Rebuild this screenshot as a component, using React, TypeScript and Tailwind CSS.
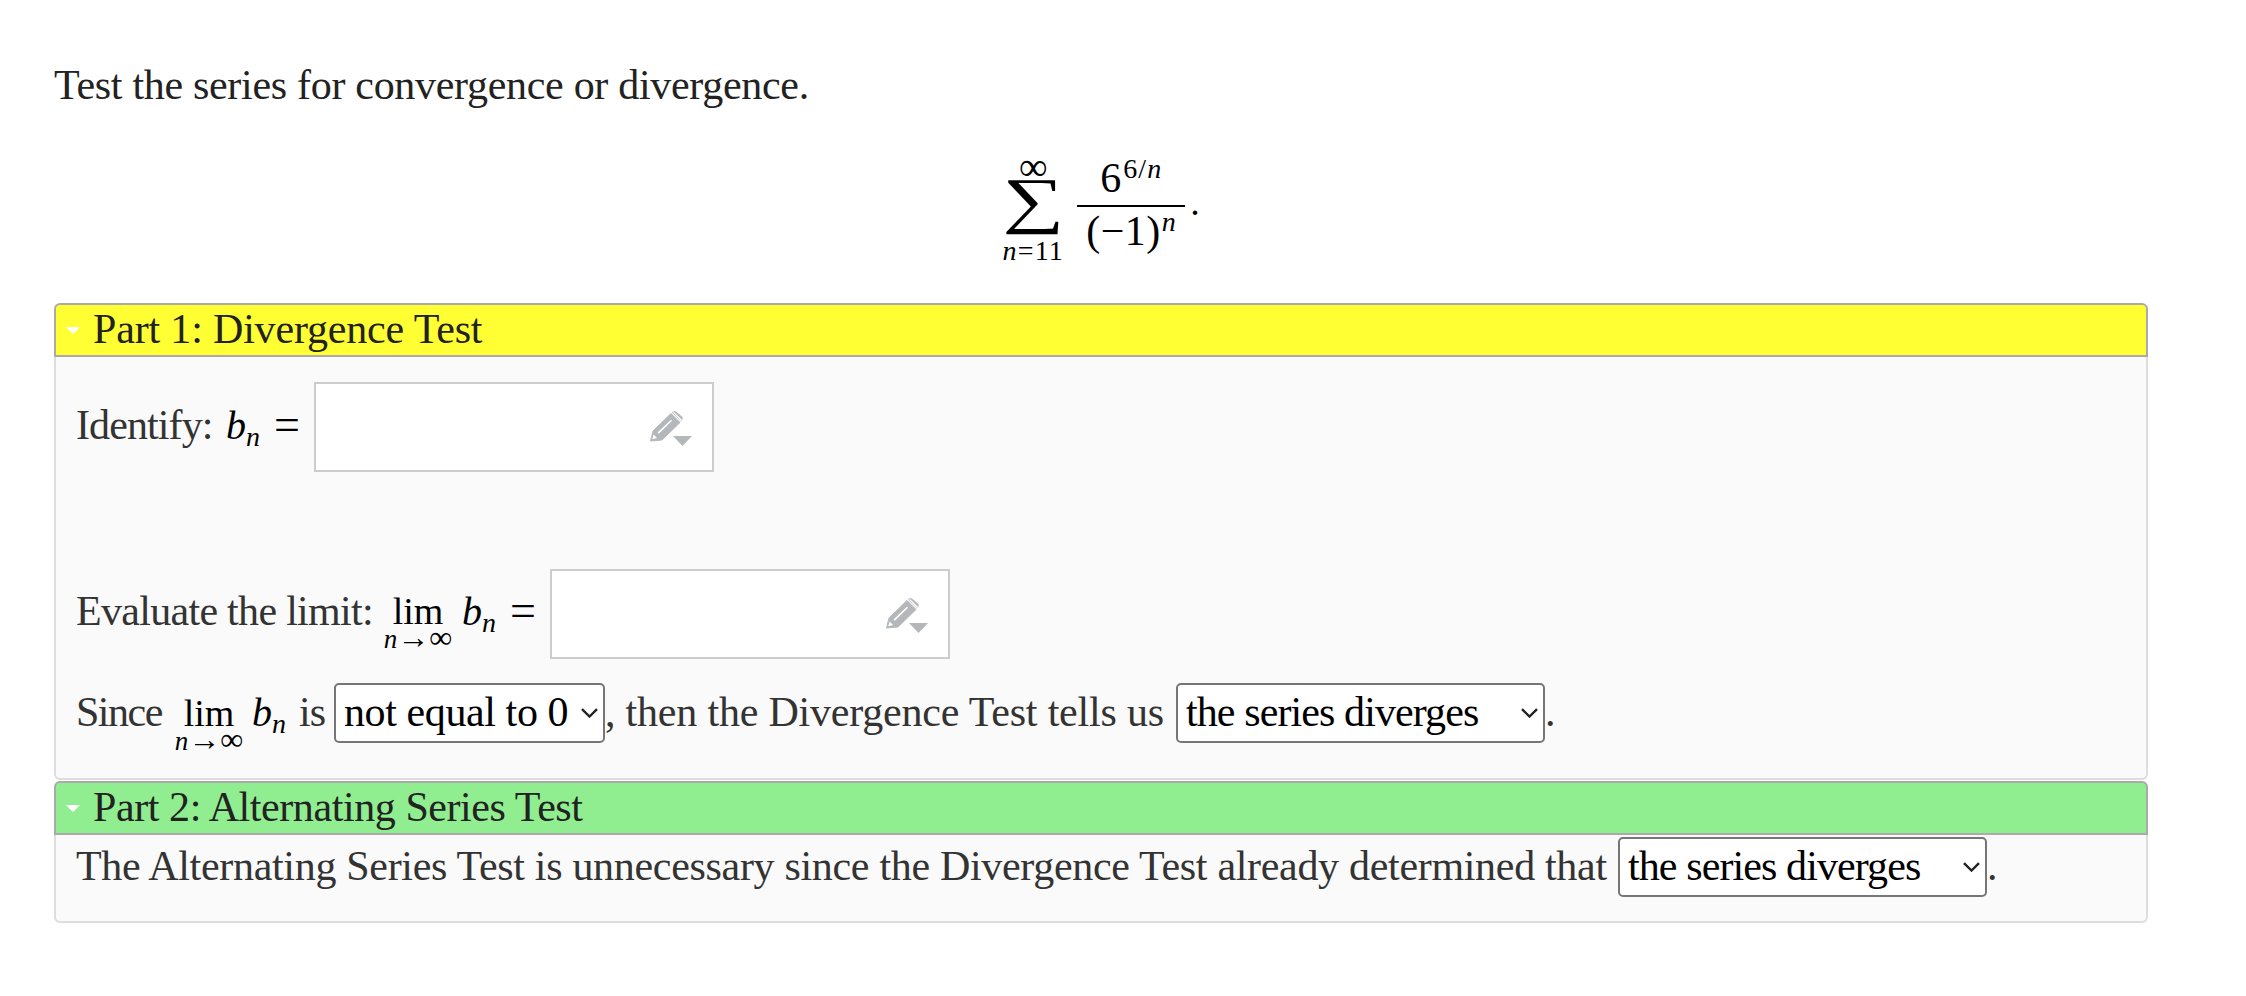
import React from "react";

const Pencil = () => (
  <svg width="42" height="35" viewBox="0 0 42 35" className="shrink-0">
    <path d="M0.5 30 L3 20 L21 2.5 L30 11.5 L12 29 Z" fill="#b4b8bb" stroke="#b4b8bb" strokeWidth="1" strokeLinejoin="round" />
    <path d="M23 0.5 Q24.5 -0.5 26 0.5 L32 5.5 Q33.5 7 32 9 L31 10.5 L22 1.8 Z" fill="#b4b8bb" />
    <path d="M23 1.8 L31 10 L32 9 L24 1 Z" fill="#ffffff" />
    <path d="M7.5 21.5 L21 8.7 L22 9.8 L8.8 22.8 Z" fill="#ffffff" />
    <path d="M2.2 28.3 L3.6 23.6 L7 27 Z" fill="#ffffff" />
    <path d="M23 25 H42 L32.5 35 Z" fill="#b4b8bb" />
  </svg>
);

const MathInput = () => (
  <div className="w-[400px] h-[90px] bg-white border-2 border-[#cccccc] flex items-center justify-end pr-[20px] pt-[3px] shrink-0">
    <Pencil />
  </div>
);

const Select = ({ value, w, track }: { value: string; w: string; track: string }) => (
  <div
    role="combobox"
    aria-expanded="false"
    className={`${w} ${track} relative h-[60px] shrink-0 bg-white text-black border-2 border-[#767676] rounded-[5px] pl-[8px] text-[42px] leading-[54px] whitespace-nowrap`}
  >
    {value}
    <svg width="17" height="10" viewBox="0 0 17 10" className="absolute right-[5px] top-[23px]">
      <path d="M1 1.2 L8.5 8.5 L16 1.2" fill="none" stroke="#222222" strokeWidth="2.4" />
    </svg>
  </div>
);

const Lim = () => (
  <span className="inline-flex flex-col items-center h-[1em] w-[70px] shrink-0 text-black">
    <span className="text-[38px] leading-[46px]">lim</span>
    <span className="text-[27px] leading-[28px] italic whitespace-nowrap -mt-[11px]">
      n<span className="not-italic text-[32px] leading-[28px]">→∞</span>
    </span>
  </span>
);

const Bn = () => (
  <span className="inline-block w-[34px] italic text-black text-[40px] leading-[48px] shrink-0">
    b<sub className="text-[28px] leading-none italic">n</sub>
  </span>
);

const Header = ({ bg, children, track }: { bg: string; track: string; children: React.ReactNode }) => (
  <div className={`${bg} ${track} h-[54px] border-2 border-[#aaaaaa] rounded-t-[6px] flex items-center text-[#222222] text-[42px] leading-[48px] pb-[2px]`}>
    <span className="w-0 h-0 ml-[10px] mr-[13px] mt-[2px] border-x-[7px] border-x-transparent border-t-[7px] border-t-white" />
    {children}
  </div>
);

export default function App() {
  return (
    <div className="w-[2246px] h-[996px] bg-white pl-[54px] pr-[98px] pt-[58px] text-[42px] [font-family:'Liberation_Serif',serif]">
      <p className="h-[54px] leading-[54px] text-[#222222] tracking-[-0.3px]">Test the series for convergence or divergence.</p>

      <div className="h-[191px] flex justify-center pt-[44px] text-black">
        <div className="flex items-start h-[110px]">
          <div className="flex flex-col items-center w-[66px] -ml-[2px]">
            <span className="text-[40px] leading-[22px] h-[22px]">∞</span>
            <span className="text-[62px] leading-[60px] h-[60px] -mt-[8px] mb-[8px] scale-x-[1.4]">∑</span>
            <span className="text-[28px] leading-[26px] whitespace-nowrap tracking-[1.2px]"><i>n</i>=11</span>
          </div>
          <div className="flex flex-col items-center w-[108px] ml-[11px] mt-[7px]">
            <span className="h-[42px] leading-[30px] text-[42px] whitespace-nowrap">6<sup className="text-[28px] leading-none tracking-[1px] ml-[2px]">6/<i>n</i></sup></span>
            <span className="w-full h-[2px] bg-black" />
            <span className="h-[46px] leading-[48px] text-[42px] whitespace-nowrap tracking-[0.5px]">(−1)<sup className="text-[28px] leading-none italic ml-[1px]">n</sup></span>
          </div>
          <span className="text-[38px] leading-[38px] mt-[27px] ml-[5px]">.</span>
        </div>
      </div>

      <div>
        <Header bg="bg-[#ffff33]" track="tracking-[-0.17px]">Part 1: Divergence Test</Header>
        <div className="h-[423px] bg-[#fafafa] border-2 border-t-0 border-[#dddddd] rounded-b-[6px] pl-[20px] pt-[25px] text-[#333333]">
          <div className="h-[90px] flex items-center whitespace-pre">
            <span className="w-[150px] tracking-[-0.9px] -mt-[4px]">Identify: </span>
            <span className="-mt-[4px]"><Bn /></span>
            <span className="ml-[14px] mr-[13px] w-[27px] text-[46px] leading-[46px] text-black -mt-[4px]">=</span>
            <MathInput />
          </div>
          <div className="h-[90px] mt-[97px] flex items-center whitespace-pre">
            <span className="w-[307px] tracking-[-0.7px] -mt-[6px]">Evaluate the limit: </span>
            <span className="w-[70px] shrink-0 -mt-[8px]"><Lim /></span>
            <span className="ml-[9px] -mt-[6px]"><Bn /></span>
            <span className="ml-[14px] mr-[13px] w-[27px] text-[46px] leading-[46px] text-black -mt-[6px]">=</span>
            <MathInput />
          </div>
          <div className="h-[60px] mt-[24px] flex items-baseline whitespace-pre leading-[48px]">
            <span className="w-[98px] tracking-[-1.5px]">Since</span>
            <Lim />
            <span className="ml-[8px]"><Bn /></span>
            <span className="w-[48px] pl-[13px] tracking-[-1px]">is</span>
            <Select w="w-[271px]" track="tracking-[-0.4px]" value="not equal to 0" />
            <span className="w-[571px] tracking-[-0.2px]">, then the Divergence Test tells us</span>
            <Select w="w-[369px]" track="tracking-[-0.9px]" value="the series diverges" />
            <span>.</span>
          </div>
        </div>
      </div>

      <div className="mt-[1px]">
        <Header bg="bg-[#90ee90]" track="tracking-[-0.42px]">Part 2: Alternating Series Test</Header>
        <div className="h-[88px] bg-[#fafafa] border-2 border-t-0 border-[#dddddd] rounded-b-[6px] pl-[20px] pt-[2px] text-[#333333]">
          <div className="h-[60px] flex items-baseline whitespace-pre leading-[48px]">
            <span className="w-[1542px] tracking-[-0.31px]">The Alternating Series Test is unnecessary since the Divergence Test already determined that</span>
            <Select w="w-[369px]" track="tracking-[-0.9px]" value="the series diverges" />
            <span>.</span>
          </div>
        </div>
      </div>
    </div>
  );
}
